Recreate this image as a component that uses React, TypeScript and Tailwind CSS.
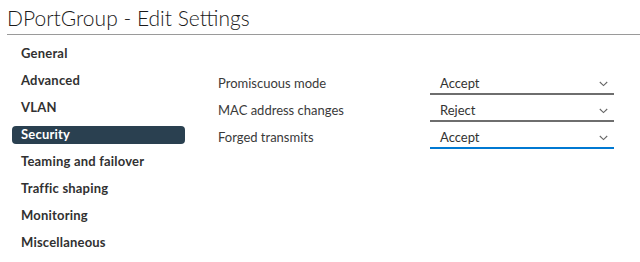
const navItems = [
  "General",
  "Advanced",
  "VLAN",
  "Security",
  "Teaming and failover",
  "Traffic shaping",
  "Monitoring",
  "Miscellaneous",
];

const fields = [
  { label: "Promiscuous mode", value: "Accept", focused: false },
  { label: "MAC address changes", value: "Reject", focused: false },
  { label: "Forged transmits", value: "Accept", focused: true },
];

function Chevron() {
  return (
    <svg width="9" height="6" viewBox="0 0 9 6" fill="none" className="text-[#666]">
      <path d="M0.8 1 L4.5 4.6 L8.2 1" stroke="currentColor" strokeWidth="1.1" />
    </svg>
  );
}

export default function App() {
  return (
    <div className="h-[262px] w-[640px] overflow-hidden bg-white font-['Lato','Liberation_Sans',sans-serif] text-[#313131]">
      <div className="ml-[7px] flex h-[35px] items-start border-b border-[#9a9a9a] pt-[5px]">
        <h1 className="text-[21px] leading-[26px] font-light text-[#1a1a1a]">
          DPortGroup - Edit Settings
        </h1>
      </div>
      <div className="flex">
        <nav className="ml-[12px] flex w-[173px] flex-col gap-[9px] pt-[10px]">
          {navItems.map((item) => (
            <div
              key={item}
              className={
                item === "Security"
                  ? "flex h-[18px] items-center rounded-[4px] bg-[#2a4050] pl-[9px] text-[13px] font-bold tracking-[0.2px] text-white"
                  : "flex h-[18px] items-center pl-[9px] text-[13px] font-bold tracking-[0.2px]"
              }
            >
              {item}
            </div>
          ))}
        </nav>
        <div className="ml-[33px] flex flex-col gap-[6px] pt-[39px]">
          {fields.map((f) => (
            <div key={f.label} className="flex items-start">
              <div className="flex h-[20px] w-[212px] items-center text-[13px] text-[#3a3a3a]">
                {f.label}
              </div>
              <div
                className={
                  f.focused
                    ? "flex h-[21px] w-[184px] items-center justify-between border-b-2 border-[#0079d2] pr-[6px] pl-[10px] text-[13px] text-[#333]"
                    : "flex h-[21px] w-[184px] items-center justify-between border-b-2 border-[#6e6e6e] pr-[6px] pl-[10px] text-[13px] text-[#333]"
                }
              >
                <span>{f.value}</span>
                <Chevron />
              </div>
            </div>
          ))}
        </div>
      </div>
    </div>
  );
}
